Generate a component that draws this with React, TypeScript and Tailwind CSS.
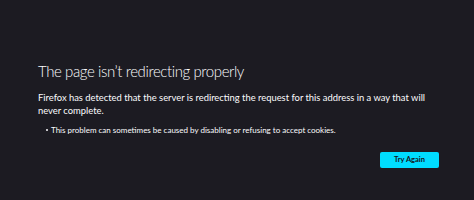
export default function App() {
  return (
    <div className="w-[474px] h-[200px] bg-[#1c1b22] text-[#fbfbfe] overflow-hidden" style={{ fontFamily: 'Lato, "Noto Sans", sans-serif' }}>
      <div className="pl-[38px] pr-[30px] pt-[61px]">
        <h1 className="text-[15px] font-light leading-[20px] tracking-[-0.4px]">The page isn’t redirecting properly</h1>
        <p className="mt-[10px] text-[9.4px] leading-[13px]">Firefox has detected that the server is redirecting the request for this address in a way that will never complete.</p>
        <ul className="mt-[7px] pl-[8px] text-[8px] leading-[12px]">
          <li className="flex items-center gap-[3px]">
            <span className="w-[2px] h-[2px] rounded-full bg-[#fbfbfe] shrink-0" />
            <span>This problem can sometimes be caused by disabling or refusing to accept cookies.</span>
          </li>
        </ul>
        <div className="flex justify-end mt-[16px] pr-[5px]">
          <button className="w-[59px] h-[16px] rounded-[2px] bg-[#00ddff] text-[#15141a] text-[7.5px] font-bold">Try Again</button>
        </div>
      </div>
    </div>
  );
}
